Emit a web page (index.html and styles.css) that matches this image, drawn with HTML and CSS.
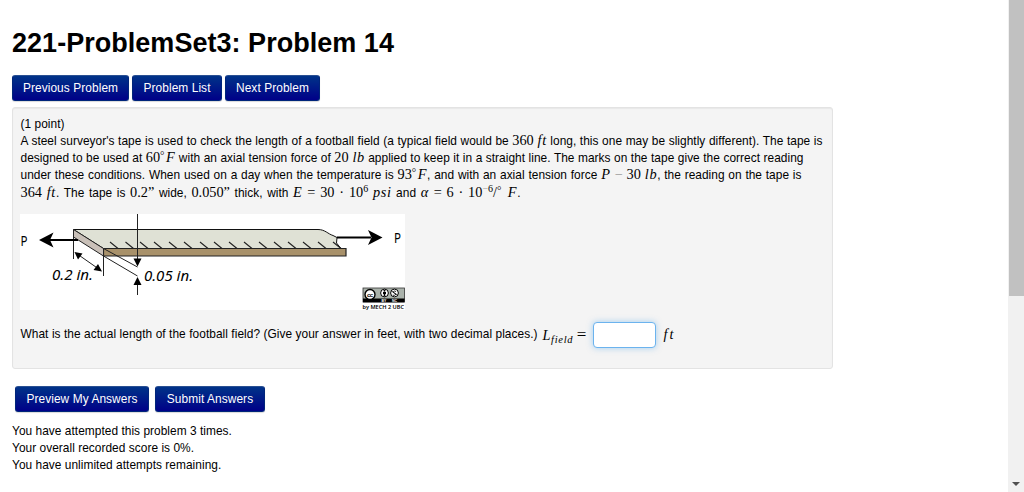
FILE: index.html
```html
<!DOCTYPE html>
<html lang="en">
<head>
    <meta charset="UTF-8">
    <title>221-ProblemSet3: Problem 14</title>
    <link rel="stylesheet" href="styles.css">
</head>
<body>
    <div class="page">
        <main class="content">
            <h1>221-ProblemSet3: Problem 14</h1>
            <div class="nav">
                <a href="#" class="btn prev">Previous Problem</a>
                <a href="#" class="btn list">Problem List</a>
                <a href="#" class="btn next">Next Problem</a>
            </div>

            <div class="problem">
                <div class="line">(1 point)</div>
                <div class="line l1">A steel surveyor's tape is used to check the length of a football field (a typical field would be <span class="math">360 <i>ft</i></span> long, this one may be slightly different). The tape is</div>
                <div class="line l2">designed to be used at <span class="math">60<sup class="deg">°</sup><i>F</i></span> with an axial tension force of <span class="math">20 <i>lb</i></span> applied to keep it in a straight line. The marks on the tape give the correct reading</div>
                <div class="line l3">under these conditions. When used on a day when the temperature is <span class="math">93<sup class="deg">°</sup><i>F</i></span>, and with an axial tension force <span class="math"><i>P</i> <span class="faint">−</span> 30 <i>lb</i></span>, the reading on the tape is</div>
                <div class="line l4"><span class="math">364 <i>ft</i></span>. The tape is <span class="math">0.2”</span> wide, <span class="math">0.050”</span> thick, with <span class="math"><i>E</i> = 30 · 10<sup>6</sup> <i>psi</i></span> and <span class="math"><i>α</i> = 6 · 10<sup><span class="faint">−</span>6</sup>/<sup class="deg">°</sup> <i>F</i></span>.</div>

                <svg class="figure" viewBox="20 214 385 96" width="385" height="96">
                    <rect x="20" y="214" width="385" height="96" fill="#fff"/>
                    <!-- tape -->
                    <path d="M73.5 229.5H318C325 229.5 328 234 333 235.5L337 237.5L336.5 243L341 248.5H103.5Z" fill="#dfe1d5" stroke="#111"/>
                    <path d="M103.5 248.5H346V256H103.5Z" fill="#a8916a" stroke="#222" stroke-width="1.2"/>
                    <path d="M73.5 229.5L103.5 248.5V256L73.5 237Z" fill="#c9c0b8" stroke="#222"/>
                    <path d="M110 242l8 6.5M125.5 242l8 6.5M140 242l8 6.5M154 242l8 6.5M169 242l8 6.5M184 242l8 6.5M200 242l8 6.5M214 242l8 6.5M229 242l8 6.5M244 242l8 6.5M259 242l8 6.5M274 242l8 6.5M288 242l8 6.5M303 242l8 6.5M318 242l8 6.5M333 242l8 6.5" stroke="#222" stroke-width="1.1" fill="none"/>
                    <!-- dimension lines -->
                    <path d="M103.5 248.5L137.5 267M103.5 256L137.5 276M73.5 237V259M103.5 256V276M137.5 214V262M137.5 281V295M78 254.5L98 268.5" stroke="#222" fill="none"/>
                    <path d="M137.5 266.5l-4-8h8zM137.5 277l-4 8h8zM74.5 252l8 1.5l-4.5 6zM102 271.5l-8.5-1.5l4.5-6z"/>
                    <!-- forces -->
                    <path d="M50 240H78M337 237.5H371" stroke="#000" stroke-width="1.8"/>
                    <path d="M39 240l14.5-7.5l-3.5 7.5l3.5 7.5zM382.5 237.5l-14.5-7.5l3.5 7.5l-3.5 7.5z"/>
                    <g class="hand">
                        <text class="force" x="20.5" y="245.5" textLength="7" lengthAdjust="spacingAndGlyphs">P</text>
                        <text class="force" x="394" y="242.5" textLength="7" lengthAdjust="spacingAndGlyphs">P</text>
                        <text x="52" y="280" textLength="41" lengthAdjust="spacingAndGlyphs">0.2 in.</text>
                        <text x="144" y="281" textLength="49" lengthAdjust="spacingAndGlyphs">0.05 in.</text>
                    </g>
                    <!-- licence badge -->
                    <rect x="363" y="288" width="41.5" height="14" fill="#aab2ab" stroke="#333" stroke-width=".8"/>
                    <rect x="363" y="298.5" width="41.5" height="3.8" fill="#000"/>
                    <g fill="#fff" stroke="#000">
                        <circle cx="370" cy="294.5" r="5" stroke-width="1.4"/>
                        <circle cx="384.5" cy="293" r="3.9"/>
                        <circle cx="394.5" cy="293" r="3.9"/>
                    </g>
                    <circle cx="384.5" cy="290.7" r="1"/>
                    <path d="M383 292h3v2h-.7v2.5h-1.6V294h-.7z"/>
                    <path d="M391.5 291l6 4M396 291.5q-1.5-1-2.5 0t1 1.8t.8 1.7t-2.5 0" stroke="#000" stroke-width=".8" fill="none"/>
                    <text class="cc" x="367" y="296.5" textLength="6">cc</text>
                    <text class="by" x="381.5" y="301.7">BY</text>
                    <text class="by" x="392" y="301.7">NC</text>
                    <text class="credit" x="362.5" y="308.5" textLength="41.5" lengthAdjust="spacingAndGlyphs">by MECH 2 UBC</text>
                </svg>

                <div class="question">
                    <label class="ask" for="answer">What is the actual length of the football field? (Give your answer in feet, with two decimal places.)</label>
                    <span class="math eq"><i>L</i><sub>field</sub> <span class="equals">=</span></span>
                    <input type="text" id="answer" class="answer">
                    <span class="math unit"><i>ft</i></span>
                </div>
            </div>

            <div class="actions">
                <button class="btn preview">Preview My Answers</button>
                <button class="btn submit">Submit Answers</button>
            </div>

            <div class="status">
                <div>You have attempted this problem 3 times.</div>
                <div>Your overall recorded score is 0%.</div>
                <div>You have unlimited attempts remaining.</div>
            </div>
        </main>
        <div class="scrollbar">
            <div class="thumb"></div>
            <div class="arrow"></div>
        </div>
    </div>
</body>
</html>
```

FILE: styles.css
```css
* {
    box-sizing: border-box;
}

body {
    margin: 0;
    background: #fff;
    color: #000;
    font: 11.9px/17px "Liberation Sans", Arial, sans-serif;
    letter-spacing: 0.04px;
    overflow: hidden;
}

.page {
    display: flex;
    height: 492px;
}

.content {
    flex: 1;
    padding: 26px 0 0 12px;
}

h1 {
    margin: 0;
    font-size: 27px;
    line-height: 34px;
    letter-spacing: 0.03px;
    white-space: nowrap;
}

.nav {
    display: flex;
    gap: 3px;
    margin-top: 15px;
}

.btn {
    height: 26px;
    padding: 0;
    border: 1px solid #00257a;
    border-top-color: #2a4f92;
    border-radius: 3px;
    background: linear-gradient(#003388, #000088);
    color: #fff;
    font: 11.9px/24px "Liberation Sans", Arial, sans-serif;
    letter-spacing: 0.08px;
    text-align: center;
    text-decoration: none;
    white-space: nowrap;
    box-shadow: 0 1px 1px rgba(0, 0, 0, 0.15);
}

.prev {
    width: 117px;
}

.list {
    width: 90px;
}

.next {
    width: 95px;
}

/* Problem box */
.problem {
    width: 821px;
    height: 262px;
    margin-top: 6px;
    padding: 8px 7.5px;
    border: 1px solid #e3e3e3;
    border-radius: 3px;
    background: #f4f4f4;
    box-shadow: inset 0 1px 1px rgba(0, 0, 0, 0.05);
}

.line {
    height: 17px;
    white-space: nowrap;
}

.l1,
.l2,
.l3,
.l4 {
    text-align-last: justify;
}

.l1 {
    width: 802px;
}

.l2 {
    width: 783px;
}

.l3 {
    width: 781px;
}

.l4 {
    width: 500px;
    padding-top: 1px;
}

.math {
    font-family: "Liberation Serif", "Times New Roman", serif;
    font-size: 14.3px;
    line-height: 1;
    letter-spacing: 0;
}

.math i {
    letter-spacing: 0.6px;
}

.math sup {
    font-size: 10px;
    line-height: 0;
    vertical-align: 5px;
}

.math .deg {
    margin-right: 1.5px;
    font-size: 11px;
    vertical-align: 3px;
}

.math sub {
    font-size: 10.5px;
    font-style: italic;
    line-height: 0;
    letter-spacing: 0.7px;
    vertical-align: -3px;
}

.faint {
    color: #999;
}

.figure {
    display: block;
    margin: 13px 0 0 -0.5px;
}

.hand {
    font: italic 14px "Noto Sans", sans-serif;
    letter-spacing: 0;
}

.force {
    font: 14px "Noto Sans", sans-serif;
}

.cc {
    font: bold 6px "Liberation Sans", sans-serif;
    letter-spacing: 0;
}

.by {
    font: bold 3.5px "Liberation Sans", sans-serif;
    letter-spacing: 0;
    fill: #fff;
}

.credit {
    font: 600 6px "Noto Sans", sans-serif;
    letter-spacing: 0;
}

.question {
    display: flex;
    align-items: center;
    height: 26px;
    margin-top: 12px;
    white-space: nowrap;
}

.ask {
    width: 517px;
    margin-top: -2px;
    text-align-last: justify;
}

.eq {
    width: 48px;
    margin: -1px 0 0 5px;
}

.equals {
    font-size: 17px;
}

.answer {
    width: 63px;
    height: 26px;
    margin-left: 2px;
    border: 1px solid #6bb3ee;
    border-radius: 4px;
    background: #fff;
    box-shadow: 0 0 6px rgba(82, 168, 236, 0.5);
    outline: none;
}

.unit {
    margin: -2px 0 0 8px;
}

.unit i {
    letter-spacing: 2px;
}

.actions {
    display: flex;
    gap: 6px;
    margin: 17px 0 0 3px;
}

.preview {
    width: 134px;
}

.submit {
    width: 110px;
}

.status {
    margin-top: 11px;
}

/* Scrollbar */
.scrollbar {
    display: flex;
    flex-direction: column;
    justify-content: space-between;
    width: 16px;
    padding: 0 0 6px 1px;
    background: #f1f1f1;
}

.thumb {
    height: 296px;
    background: #c1c1c1;
}

.arrow {
    margin-left: 3px;
    width: 0;
    border: 4px solid transparent;
    border-top-color: #505050;
    border-bottom: 0;
}
```
